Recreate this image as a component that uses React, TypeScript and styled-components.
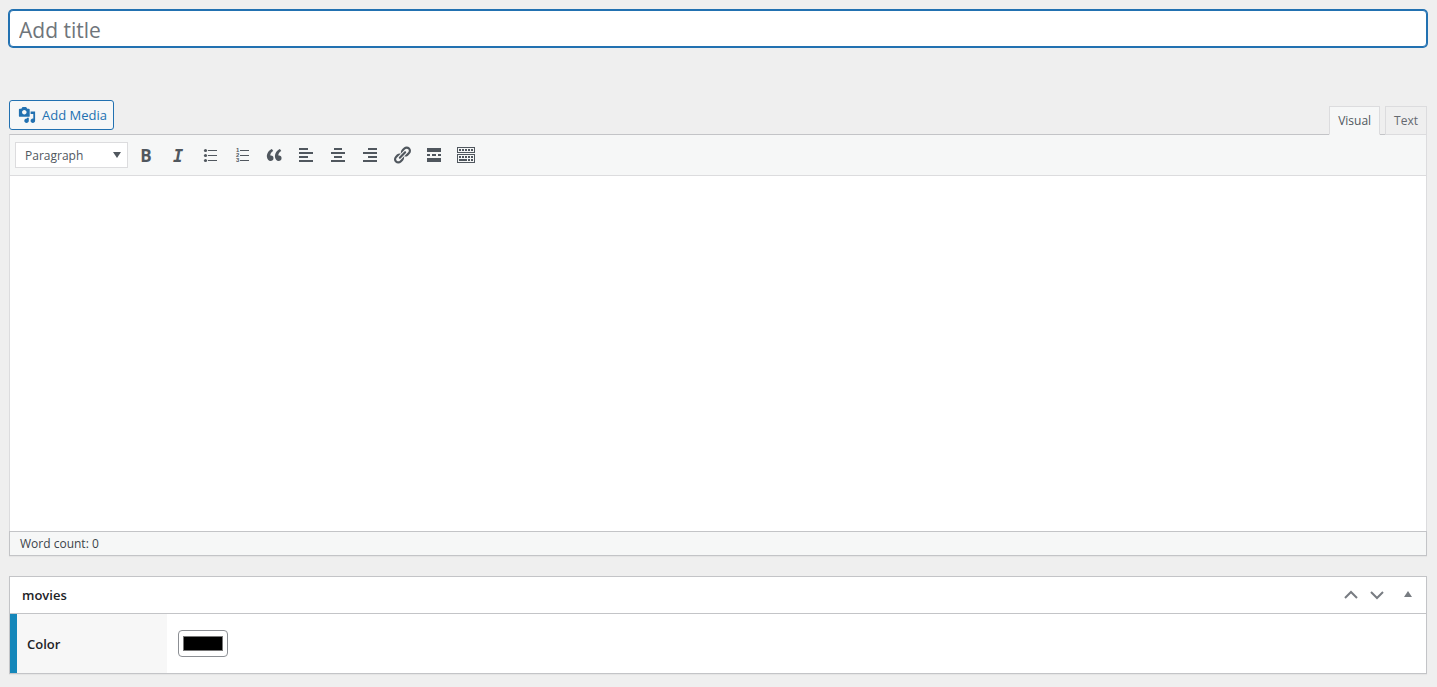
import React from 'react';
import styled, { createGlobalStyle, css } from 'styled-components';

const GlobalStyle = createGlobalStyle`
  * { box-sizing: border-box; }
  body {
    margin: 0;
    background: #efefef;
    color: #3c434a;
    font-family: "Open Sans", "Noto Sans", sans-serif;
    font-size: 12px;
    line-height: 20px;
  }
  button, input, select, textarea { font-family: inherit; margin: 0; }
`;

const Page = styled.form`
  padding: 10px 10px 12px 9px;
`;

const TitleInput = styled.input`
  display: block;
  width: 100%;
  height: 37px;
  padding: 2px 9px 0;
  border: 1px solid #2271b1;
  border-radius: 4px;
  box-shadow: 0 0 0 1px #2271b1;
  outline: none;
  background: #fff;
  color: #2c3338;
  font-size: 21px;
  &::placeholder { color: #6f757b; opacity: 1; }
`;

const EditorTools = styled.div`
  display: flex;
  justify-content: space-between;
  align-items: flex-end;
  margin-top: 53px;
`;

const MediaButton = styled.button`
  display: flex;
  align-items: center;
  gap: 6px;
  height: 30px;
  margin-bottom: 4px;
  padding: 0 6px 0 8px;
  border: 1px solid #2271b1;
  border-radius: 3px;
  background: #f6f7f7;
  color: #2271b1;
  font-size: 13px;
  white-space: nowrap;
`;

const Tabs = styled.div`
  display: flex;
  gap: 5px;
  position: relative;
  margin-bottom: -1px;
`;

const Tab = styled.button<{ $active?: boolean }>`
  height: 29px;
  padding: 0 8px;
  border: 1px solid #dcdcde;
  border-bottom-color: ${p => (p.$active ? '#f6f7f7' : '#dcdcde')};
  background: ${p => (p.$active ? '#f6f7f7' : '#efefef')};
  color: ${p => (p.$active ? '#50575e' : '#646970')};
  font-size: 12px;
`;

const Editor = styled.section`
  border: 1px solid #dcdcde;
  border-top-color: #c3c4c7;
  border-bottom: 0;
  background: #fff;
`;

const Toolbar = styled.div`
  display: flex;
  align-items: center;
  gap: 4px;
  height: 41px;
  padding: 0 5px;
  border-bottom: 1px solid #dcdcde;
  background: #f6f7f7;
`;

const FormatPicker = styled.div`
  display: grid;
  align-items: center;
  width: 113px;
  > * { grid-area: 1 / 1; }
  > svg { justify-self: end; margin-right: 7px; pointer-events: none; }
`;

const FormatSelect = styled.select`
  appearance: none;
  width: 100%;
  height: 26px;
  padding: 0 20px 0 9px;
  border: 1px solid #dcdcde;
  border-radius: 0;
  background: #fff;
  color: #50575e;
  font-size: 12px;
`;

const ToolButton = styled.button`
  display: grid;
  place-items: center;
  width: 28px;
  height: 28px;
  padding: 0;
  border: 0;
  background: transparent;
  color: #50575e;
`;

const Letter = styled.span<{ $italic?: boolean }>`
  padding-top: 2px;
  font-weight: 700;
  font-size: 17px;
  line-height: 20px;
  ${p => p.$italic && css`
    font-family: "DejaVu Sans Mono", monospace;
    font-style: italic;
  `}
`;

const Content = styled.textarea`
  display: block;
  width: 100%;
  height: 355px;
  padding: 10px;
  border: 0;
  outline: none;
  resize: none;
  background: #fff;
`;

const StatusBar = styled.div`
  height: 25px;
  padding: 0 10px;
  border: 1px solid #c3c4c7;
  background: #f6f7f7;
  box-shadow: 0 1px 1px rgba(0, 0, 0, 0.04);
  line-height: 24px;
`;

const MetaBox = styled.section`
  margin-top: 20px;
  border: 1px solid #c3c4c7;
  background: #fff;
  box-shadow: 0 1px 1px rgba(0, 0, 0, 0.04);
`;

const MetaHeader = styled.header`
  display: flex;
  justify-content: space-between;
  align-items: center;
  height: 37px;
  padding: 0 8px 0 12px;
  border-bottom: 1px solid #c3c4c7;
`;

const MetaTitle = styled.h2`
  margin: 0;
  color: #1d2327;
  font-size: 13px;
  font-weight: 600;
`;

const MetaActions = styled.div`
  display: flex;
  align-items: center;
`;

const MetaAction = styled.button<{ $wide?: boolean }>`
  display: grid;
  place-items: center;
  width: ${p => (p.$wide ? 28 : 26)}px;
  height: 36px;
  padding: 0 0 ${p => (p.$wide ? '2px 8px' : '0 0')};
  border: 0;
  background: transparent;
  color: #787c82;
`;

const Field = styled.div`
  display: flex;
  min-height: 59px;
  border-left: 7px solid #1587ba;
`;

const FieldLabel = styled.label`
  display: flex;
  align-items: center;
  width: 150px;
  padding: 0 10px;
  background: #f7f7f7;
  color: #1d2327;
  font-size: 13px;
  font-weight: 600;
`;

const FieldControl = styled.div`
  display: flex;
  align-items: center;
  padding: 0 11px;
`;

const ColorInput = styled.input`
  appearance: none;
  width: 50px;
  height: 27px;
  padding: 0;
  border: 1px solid #8c8f94;
  border-radius: 4px;
  background: #fff;
  &::-webkit-color-swatch-wrapper { padding: 5px 4px; }
  &::-webkit-color-swatch { border: 1px solid #777; border-radius: 0; }
`;

const Icon = ({ size = 20, children }: { size?: number; children: React.ReactNode }) => (
  <svg width={size} height={size} viewBox="0 0 20 20" fill="currentColor" aria-hidden="true">
    {children}
  </svg>
);

const MediaIcon = () => (
  <Icon size={18}>
    <path d="M13 11V4c0-.55-.45-1-1-1h-1.67L9 1H5L3.67 3H2c-.55 0-1 .45-1 1v7c0 .55.45 1 1 1h10c.55 0 1-.45 1-1zM7 4.500c1.380 0 2.500 1.120 2.500 2.500S8.380 9.500 7 9.500 4.500 8.380 4.500 7 5.620 4.500 7 4.500zM14 6h5v10.500c0 1.380-1.120 2.500-2.500 2.500S14 17.880 14 16.500s1.120-2.500 2.500-2.500c.17 0 .34.02.5.05V9h-3V6zm-4 8.050V13h2v3.500c0 1.380-1.120 2.500-2.500 2.500S7 17.880 7 16.500 8.120 14 9.500 14c.17 0 .34.02.5.05z" />
  </Icon>
);

const BulletIcon = () => (
  <Icon>
    {[5, 10, 15].map(y => (
      <g key={y}>
        <circle cx="5.5" cy={y + 0.5} r="1.6" />
        <rect x="8" y={y} width="9" height="1" />
      </g>
    ))}
  </Icon>
);

const NumberIcon = () => (
  <Icon>
    {[5, 10, 15].map((y, i) => (
      <g key={y}>
        <text x="4" y={y + 2} fontSize="6" fontWeight="700" fontFamily="Liberation Sans, sans-serif">{i + 1}</text>
        <rect x="8" y={y} width="9" height="1" />
      </g>
    ))}
  </Icon>
);

const QuoteIcon = () => (
  <Icon>
    <path d="M9.490 13.220c0-.74-.2-1.380-.61-1.900-.62-.78-1.830-.88-2.530-.72-.29-1.650 1.110-3.750 2.920-4.650L7.880 4c-2.730 1.300-5.420 4.280-4.960 8.050C3.210 14.430 4.590 16 6.540 16c.85 0 1.560-.25 2.120-.75s.83-1.180.83-2.030zm8.050 0c0-.74-.2-1.380-.61-1.900-.63-.78-1.830-.88-2.530-.72-.29-1.650 1.110-3.750 2.920-4.650L15.930 4c-2.730 1.300-5.410 4.280-4.950 8.050.29 2.380 1.660 3.950 3.610 3.950.85 0 1.560-.25 2.120-.75s.83-1.180.83-2.030z" />
  </Icon>
);

const alignStart = { left: 3, center: 6, right: 8 };

const AlignIcon = ({ side }: { side: keyof typeof alignStart }) => {
  const x = alignStart[side];
  const width = side === 'center' ? 8 : 9;
  return (
    <Icon>
      <rect x={x} y="3" width={width} height="2" />
      <rect x="3" y="7" width="14" height="2" />
      <rect x={x} y="11" width={width} height="2" />
      <rect x="3" y="15" width="14" height="2" />
    </Icon>
  );
};

const LinkIcon = () => (
  <Icon>
    <path d="M17.740 2.760c1.680 1.690 1.680 4.410 0 6.100l-1.530 1.520c-1.120 1.120-2.700 1.470-4.140 1.090l2.620-2.610.76-.77.76-.76c.84-.84.84-2.200 0-3.040-.84-.85-2.200-.85-3.040 0l-.77.76-3.380 3.380c-.37-1.440-.02-3.020 1.100-4.140l1.520-1.530c1.690-1.680 4.420-1.680 6.100 0zM8.590 13.430l5.340-5.340c.42-.42.42-1.100 0-1.520-.44-.43-1.130-.39-1.530 0l-5.330 5.340c-.42.42-.42 1.100 0 1.520.44.43 1.130.39 1.520 0zm-.76 2.290l4.140-4.150c.38 1.440.03 3.020-1.090 4.140l-1.520 1.530c-1.690 1.680-4.410 1.680-6.100 0-1.680-1.680-1.680-4.420 0-6.100l1.530-1.520c1.120-1.120 2.700-1.470 4.140-1.100l-4.140 4.150c-.85.84-.85 2.200 0 3.050.84.84 2.200.84 3.040 0z" />
  </Icon>
);

const MoreIcon = () => (
  <Icon>
    <path d="M3 3h14v4H3zM3 9h3v2H3zM8 9h4v2H8zM14 9h3v2h-3zM3 13h14v4H3z" />
  </Icon>
);

const KeyboardIcon = () => (
  <Icon>
    <path fillRule="evenodd" d="M1 2h18v6H1zM2 3v4h16V3zM1 9h18v9H1zM2 10v7h16v-7z" />
    <path d="M3 4h2v2H3zM6 4h2v2H6zM9 4h2v2H9zM12 4h2v2h-2zM15 4h2v2h-2zM3 11h2v2H3zM6 11h2v2H6zM9 11h2v2H9zM12 11h2v2h-2zM15 11h2v2h-2zM3 14h8v2H3zM12 14h2v2h-2zM15 14h2v2h-2z" />
  </Icon>
);

const Chevron = ({ down }: { down?: boolean }) => (
  <Icon>
    <path d={down ? 'M4 7l6 6 6-6' : 'M4 13l6-6 6 6'} fill="none" stroke="currentColor" strokeWidth="2" />
  </Icon>
);

const tools = [
  { label: 'Bold', icon: <Letter>B</Letter> },
  { label: 'Italic', icon: <Letter $italic>I</Letter> },
  { label: 'Bulleted list', icon: <BulletIcon /> },
  { label: 'Numbered list', icon: <NumberIcon /> },
  { label: 'Blockquote', icon: <QuoteIcon /> },
  { label: 'Align left', icon: <AlignIcon side="left" /> },
  { label: 'Align center', icon: <AlignIcon side="center" /> },
  { label: 'Align right', icon: <AlignIcon side="right" /> },
  { label: 'Insert link', icon: <LinkIcon /> },
  { label: 'Insert Read More tag', icon: <MoreIcon /> },
  { label: 'Toolbar Toggle', icon: <KeyboardIcon /> },
];

export default function App() {
  return (
    <>
      <GlobalStyle />
      <Page onSubmit={e => e.preventDefault()}>
        <TitleInput type="text" aria-label="Add title" placeholder="Add title" autoComplete="off" />

        <EditorTools>
          <MediaButton type="button"><MediaIcon />Add Media</MediaButton>
          <Tabs>
            <Tab type="button" $active>Visual</Tab>
            <Tab type="button">Text</Tab>
          </Tabs>
        </EditorTools>

        <Editor>
          <Toolbar>
            <FormatPicker>
              <FormatSelect aria-label="Format" defaultValue="p">
                <option value="p">Paragraph</option>
              </FormatSelect>
              <svg width="8" height="6" viewBox="0 0 8 6" fill="#50575e" aria-hidden="true">
                <path d="M0 0h8L4 6z" />
              </svg>
            </FormatPicker>
            {tools.map(t => (
              <ToolButton key={t.label} type="button" aria-label={t.label}>{t.icon}</ToolButton>
            ))}
          </Toolbar>
          <Content aria-label="Content" />
        </Editor>
        <StatusBar>Word count: 0</StatusBar>

        <MetaBox>
          <MetaHeader>
            <MetaTitle>movies</MetaTitle>
            <MetaActions>
              <MetaAction type="button" aria-label="Move up"><Chevron /></MetaAction>
              <MetaAction type="button" aria-label="Move down"><Chevron down /></MetaAction>
              <MetaAction type="button" aria-label="Toggle panel" $wide>
                <svg width="8" height="6" viewBox="0 0 8 6" fill="currentColor" aria-hidden="true">
                  <path d="M0 6h8L4 0z" />
                </svg>
              </MetaAction>
            </MetaActions>
          </MetaHeader>
          <Field>
            <FieldLabel htmlFor="color">Color</FieldLabel>
            <FieldControl>
              <ColorInput id="color" type="color" defaultValue="#000000" />
            </FieldControl>
          </Field>
        </MetaBox>
      </Page>
    </>
  );
}
